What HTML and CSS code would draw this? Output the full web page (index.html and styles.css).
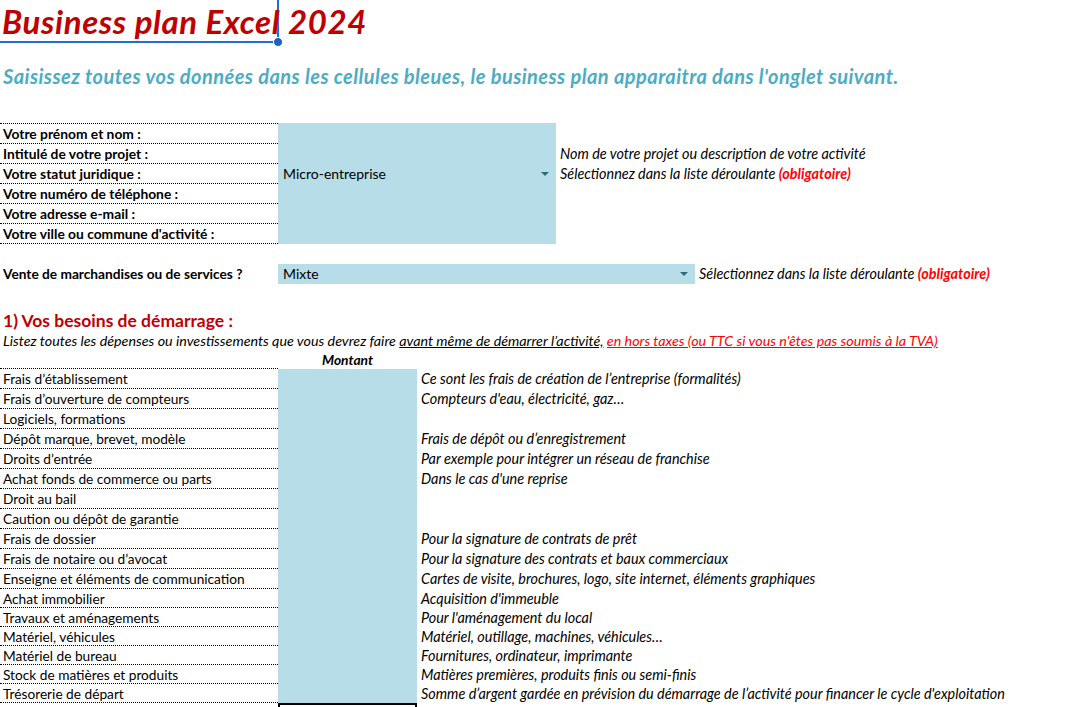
FILE: index.html
```html
<!DOCTYPE html>
<html lang="fr">
<head>
<meta charset="utf-8">
<title>Business plan Excel 2024</title>
<link rel="stylesheet" href="styles.css">
</head>
<body>
<div class="sheet">
  <div class="title-row">
    <div class="title-cell">
      <span class="title">Business plan Excel 2024</span>
      <span class="handle"></span>
    </div>
  </div>
  <div class="subtitle-row">Saisissez toutes vos données dans les cellules bleues, le business plan apparaitra dans l'onglet suivant.</div>

  <div class="info-block">
    <div class="labels">
      <div class="lab first">Votre prénom et nom :</div>
      <div class="lab">Intitulé de votre projet :</div>
      <div class="lab">Votre statut juridique :</div>
      <div class="lab">Votre numéro de téléphone :</div>
      <div class="lab">Votre adresse e-mail :</div>
      <div class="lab">Votre ville ou commune d'activité :</div>
    </div>
    <div class="bluebox">
      <div class="bcell"></div>
      <div class="bcell"></div>
      <div class="bcell">Micro-entreprise<span class="arrow"></span></div>
      <div class="bcell"></div>
      <div class="bcell"></div>
      <div class="bcell"></div>
    </div>
    <div class="notes">
      <div class="note"></div>
      <div class="note">Nom de votre projet ou description de votre activité</div>
      <div class="note">Sélectionnez dans la liste déroulante <b class="req">(obligatoire)</b></div>
    </div>
  </div>

  <div class="vente-row">
    <div class="vlab">Vente de marchandises ou de services ?</div>
    <div class="vcell">Mixte<span class="arrow"></span></div>
    <div class="note">Sélectionnez dans la liste déroulante <b class="req">(obligatoire)</b></div>
  </div>

  <div class="h1">1) Vos besoins de démarrage :</div>
  <div class="intro">Listez toutes les dépenses ou investissements que vous devrez faire <u>avant même de démarrer l’activité,</u> <u class="red">en hors taxes (ou TTC si vous n'êtes pas soumis à la TVA)</u></div>
  <div class="montant-row"><span class="mont">Montant</span></div>

  <div class="list">
    <div class="lrow"><div class="ll">Frais d’établissement</div><div class="lb"></div><div class="ln">Ce sont les frais de création de l’entreprise (formalités)</div></div>
    <div class="lrow"><div class="ll">Frais d’ouverture de compteurs</div><div class="lb"></div><div class="ln">Compteurs d'eau, électricité, gaz…</div></div>
    <div class="lrow"><div class="ll">Logiciels, formations</div><div class="lb"></div><div class="ln"></div></div>
    <div class="lrow"><div class="ll">Dépôt marque, brevet, modèle</div><div class="lb"></div><div class="ln">Frais de dépôt ou d’enregistrement</div></div>
    <div class="lrow"><div class="ll">Droits d’entrée</div><div class="lb"></div><div class="ln">Par exemple pour intégrer un réseau de franchise</div></div>
    <div class="lrow"><div class="ll">Achat fonds de commerce ou parts</div><div class="lb"></div><div class="ln">Dans le cas d'une reprise</div></div>
    <div class="lrow"><div class="ll">Droit au bail</div><div class="lb"></div><div class="ln"></div></div>
    <div class="lrow"><div class="ll">Caution ou dépôt de garantie</div><div class="lb"></div><div class="ln"></div></div>
    <div class="lrow"><div class="ll">Frais de dossier</div><div class="lb"></div><div class="ln">Pour la signature de contrats de prêt</div></div>
    <div class="lrow"><div class="ll">Frais de notaire ou d’avocat</div><div class="lb"></div><div class="ln">Pour la signature des contrats et baux commerciaux</div></div>
    <div class="lrow"><div class="ll">Enseigne et éléments de communication</div><div class="lb"></div><div class="ln">Cartes de visite, brochures, logo, site internet, éléments graphiques</div></div>
    <div class="lrow s"><div class="ll">Achat immobilier</div><div class="lb"></div><div class="ln">Acquisition d'immeuble</div></div>
    <div class="lrow s"><div class="ll">Travaux et aménagements</div><div class="lb"></div><div class="ln">Pour l'aménagement du local</div></div>
    <div class="lrow s"><div class="ll">Matériel, véhicules</div><div class="lb"></div><div class="ln">Matériel, outillage, machines, véhicules…</div></div>
    <div class="lrow s"><div class="ll">Matériel de bureau</div><div class="lb"></div><div class="ln">Fournitures, ordinateur, imprimante</div></div>
    <div class="lrow s"><div class="ll">Stock de matières et produits</div><div class="lb"></div><div class="ln">Matières premières, produits finis ou semi-finis</div></div>
    <div class="lrow s"><div class="ll">Trésorerie de départ</div><div class="lb"></div><div class="ln">Somme d’argent gardée en prévision du démarrage de l’activité pour financer le cycle d'exploitation</div></div>
    <div class="lrow total"><div class="ll"></div><div class="lb tot"></div><div class="ln"></div></div>
  </div>
</div>
</body>
</html>
```

FILE: styles.css
```css
html, body {
  margin: 0;
  padding: 0;
  background: #ffffff;
}
body {
  font-family: Lato, "Open Sans", "Liberation Sans", sans-serif;
  font-size: 14px;
  color: #000;
  overflow: hidden;
}
.sheet {
  width: 1070px;
  height: 707px;
  overflow: hidden;
}
.title-row {
  height: 44px;
}
.title-cell {
  position: relative;
  width: 277px;
  height: 41px;
  border-right: 2px solid #1f6fd6;
  border-bottom: 2px solid #1f6fd6;
}
.title {
  position: absolute;
  left: 2px;
  top: 1px;
  font-size: 33px;
  font-weight: 700;
  font-style: italic;
  color: #c00000;
  white-space: nowrap;
  letter-spacing: 0.6px;
}
.handle {
  position: absolute;
  right: -6px;
  bottom: -6px;
  width: 8px;
  height: 8px;
  border-radius: 50%;
  background: #1f5fc8;
  border: 1px solid #ffffff;
}
.subtitle-row {
  height: 20px;
  margin-top: 22px;
  padding-left: 3px;
  font-size: 20px;
  line-height: 20px;
  font-weight: 700;
  font-style: italic;
  color: #4bacc6;
  white-space: nowrap;
  letter-spacing: 0.45px;
}
.info-block {
  display: flex;
  margin-top: 37px;
}
.labels {
  width: 278px;
}
.lab {
  height: 19px;
  line-height: 20px;
  padding-left: 3px;
  font-weight: 700;
  border-bottom: 1px dotted #000;
  white-space: nowrap;
  font-size: 13.8px;
}
.lab.first {
  border-top: 1px dotted #000;
}
.bluebox {
  width: 278px;
  background: #b7dde8;
  padding-top: 1px;
}
.bcell {
  position: relative;
  height: 20px;
  line-height: 20px;
  padding-left: 5px;
}
.arrow {
  position: absolute;
  right: 7px;
  top: 8px;
  width: 0;
  height: 0;
  border-left: 4px solid transparent;
  border-right: 4px solid transparent;
  border-top: 4px solid #2e6b7c;
}
.notes {
  padding-left: 4px;
  padding-top: 1px;
}
.note {
  height: 20px;
  line-height: 20px;
  font-style: italic;
  font-size: 14.4px;
  white-space: nowrap;
}
.req {
  color: #ff0000;
  font-weight: 700;
}
.vente-row {
  display: flex;
  margin-top: 20px;
  height: 20px;
  line-height: 20px;
}
.vlab {
  width: 275px;
  padding-left: 3px;
  font-weight: 700;
  font-size: 13.7px;
  white-space: nowrap;
}
.vcell {
  position: relative;
  width: 412px;
  padding-left: 5px;
  background: #b7dde8;
  margin-right: 4px;
}
.h1 {
  margin-top: 27px;
  height: 20px;
  line-height: 20px;
  padding-left: 3px;
  font-size: 17.5px;
  font-weight: 700;
  color: #c00000;
  white-space: nowrap;
}
.intro {
  margin-top: 1px;
  height: 18px;
  line-height: 18px;
  padding-left: 3px;
  font-size: 14.3px;
  font-style: italic;
  white-space: nowrap;
}
.intro u.red {
  color: #ff0000;
}
.montant-row {
  display: flex;
  height: 19px;
  line-height: 19px;
  padding-left: 278px;
  position: relative;
}
.montant-row::after {
  content: "";
  position: absolute;
  left: 0;
  bottom: 0;
  width: 278px;
  border-bottom: 1px dotted #000;
}
.mont {
  width: 139px;
  text-align: center;
  font-weight: 700;
  font-style: italic;
  font-size: 13.8px;
}
.list {
  display: flex;
  flex-direction: column;
}
.lrow {
  display: flex;
  height: 20px;
}
.lrow.s {
  height: 19px;
}
.ll {
  width: 278px;
  padding-left: 3px;
  height: 100%;
  box-sizing: border-box;
  border-bottom: 1px dotted #000;
  line-height: 20px;
  white-space: nowrap;
  font-size: 13.7px;
}
.lrow.s .ll {
  line-height: 19px;
}
.lb {
  width: 139px;
  background: #b7dde8;
}
.ln {
  padding-left: 4px;
  line-height: 20px;
  font-style: italic;
  font-size: 14.4px;
  white-space: nowrap;
}
.lrow.s .ln {
  line-height: 19px;
}
.lrow.total .ll {
  border-bottom: none;
}
.lb.tot {
  background: #ffffff;
  border: 2px solid #000;
  box-sizing: border-box;
  width: 139px;
}
```
